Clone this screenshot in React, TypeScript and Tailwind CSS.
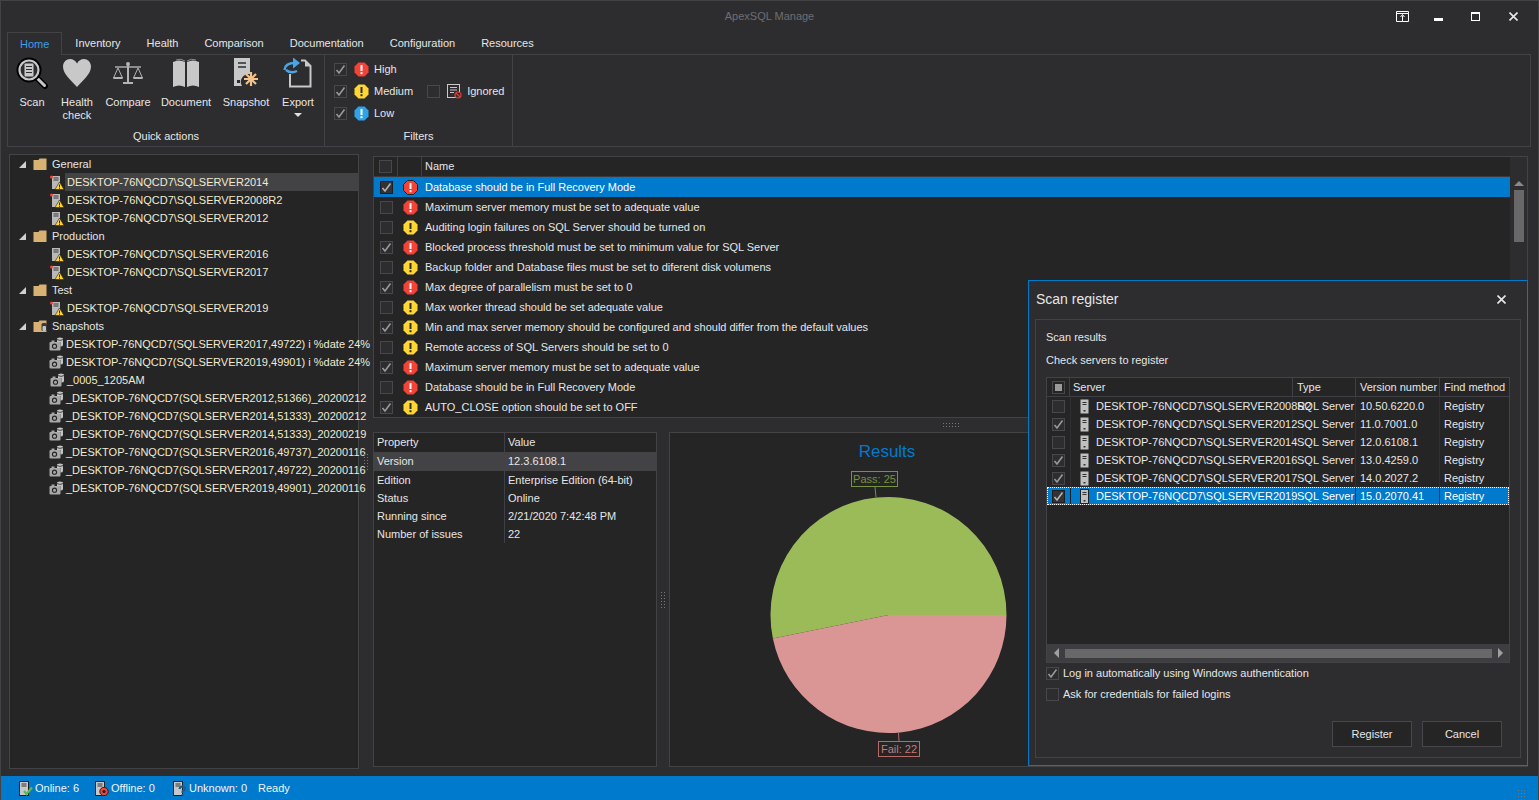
import React from 'react';

const tabs = ['Home', 'Inventory', 'Health', 'Comparison', 'Documentation', 'Configuration', 'Resources'];

type Level = 'high' | 'medium' | 'low';

const issues: { name: string; checked: boolean; level: Level }[] = [
  { name: 'Database should be in Full Recovery Mode', checked: true, level: 'high' },
  { name: 'Maximum server memory must be set to adequate value', checked: false, level: 'high' },
  { name: 'Auditing login failures on SQL Server should be turned on', checked: false, level: 'medium' },
  { name: 'Blocked process threshold must be set to minimum value for SQL Server', checked: true, level: 'high' },
  { name: 'Backup folder and Database files must be set to diferent disk volumens', checked: false, level: 'medium' },
  { name: 'Max degree of parallelism must be set to 0', checked: true, level: 'high' },
  { name: 'Max worker thread should be set adequate value', checked: false, level: 'medium' },
  { name: 'Min and max server memory should be configured and should differ from the default values', checked: true, level: 'medium' },
  { name: 'Remote access of SQL Servers should be set to 0', checked: false, level: 'medium' },
  { name: 'Maximum server memory must be set to adequate value', checked: true, level: 'high' },
  { name: 'Database should be in Full Recovery Mode', checked: false, level: 'high' },
  { name: 'AUTO_CLOSE option should be set to OFF', checked: true, level: 'medium' },
];

const tree = [
  {
    name: 'General', snapshot: false,
    items: [
      { name: 'DESKTOP-76NQCD7\\SQLSERVER2014', dot: true, selected: true },
      { name: 'DESKTOP-76NQCD7\\SQLSERVER2008R2', dot: true },
      { name: 'DESKTOP-76NQCD7\\SQLSERVER2012', dot: false },
    ],
  },
  {
    name: 'Production', snapshot: false,
    items: [
      { name: 'DESKTOP-76NQCD7\\SQLSERVER2016', dot: false },
      { name: 'DESKTOP-76NQCD7\\SQLSERVER2017', dot: true },
    ],
  },
  { name: 'Test', snapshot: false, items: [{ name: 'DESKTOP-76NQCD7\\SQLSERVER2019', dot: true }] },
  {
    name: 'Snapshots', snapshot: true,
    items: [
      { name: 'DESKTOP-76NQCD7(SQLSERVER2017,49722) i %date 24%' },
      { name: 'DESKTOP-76NQCD7(SQLSERVER2019,49901) i %date 24%' },
      { name: '_0005_1205AM' },
      { name: '_DESKTOP-76NQCD7(SQLSERVER2012,51366)_20200212' },
      { name: '_DESKTOP-76NQCD7(SQLSERVER2014,51333)_20200212' },
      { name: '_DESKTOP-76NQCD7(SQLSERVER2014,51333)_20200219' },
      { name: '_DESKTOP-76NQCD7(SQLSERVER2016,49737)_20200116' },
      { name: '_DESKTOP-76NQCD7(SQLSERVER2017,49722)_20200116' },
      { name: '_DESKTOP-76NQCD7(SQLSERVER2019,49901)_20200116' },
    ],
  },
];

const properties = [
  ['Version', '12.3.6108.1'],
  ['Edition', 'Enterprise Edition (64-bit)'],
  ['Status', 'Online'],
  ['Running since', '2/21/2020 7:42:48 PM'],
  ['Number of issues', '22'],
];

const servers = [
  { name: 'DESKTOP-76NQCD7\\SQLSERVER2008R2', version: '10.50.6220.0', checked: false },
  { name: 'DESKTOP-76NQCD7\\SQLSERVER2012', version: '11.0.7001.0', checked: true },
  { name: 'DESKTOP-76NQCD7\\SQLSERVER2014', version: '12.0.6108.1', checked: false },
  { name: 'DESKTOP-76NQCD7\\SQLSERVER2016', version: '13.0.4259.0', checked: true },
  { name: 'DESKTOP-76NQCD7\\SQLSERVER2017', version: '14.0.2027.2', checked: true },
  { name: 'DESKTOP-76NQCD7\\SQLSERVER2019', version: '15.0.2070.41', checked: true, selected: true },
];

function Check({ checked, dark }: { checked?: boolean; dark?: boolean }) {
  return (
    <span className={`flex h-[13px] w-[13px] shrink-0 items-center justify-center border ${dark ? 'border-[#1f1f1f] bg-[#333337]' : 'border-[#48484c] bg-[#2d2d30]'}`}>
      {checked && (
        <svg width="11" height="11" viewBox="0 0 11 11">
          <path d="M1.5 6 L4 9 L9.5 1.5" fill="none" stroke={dark ? '#b4b4b4' : '#999999'} strokeWidth="1.6" />
        </svg>
      )}
    </span>
  );
}

function LevelIcon({ level, ring }: { level: Level; ring?: boolean }) {
  const fill = level === 'high' ? '#f44336' : level === 'medium' ? '#ffd633' : '#2ea3e8';
  const mark = level === 'medium' ? '#2d2d30' : '#ffffff';
  return (
    <svg width="15" height="15" viewBox="0 0 15 15" className="shrink-0">
      <path
        d="M4.5 0.5 H10.5 L14.5 4.5 V10.5 L10.5 14.5 H4.5 L0.5 10.5 V4.5 Z"
        fill={fill}
        stroke={ring ? '#252526' : 'none'}
      />
      <rect x="6.5" y="3" width="2" height="6" fill={mark} />
      <rect x="6.5" y="10.2" width="2" height="2" fill={mark} />
    </svg>
  );
}

function TreeServer({ dot }: { dot?: boolean }) {
  return (
    <svg width="14" height="15" viewBox="0 0 14 15" className="shrink-0">
      <rect x="2" y="1" width="8" height="13" fill="#b9b9b9" />
      <rect x="3.5" y="2.5" width="5" height="1" fill="#3a3a3a" />
      <rect x="3.5" y="4.5" width="5" height="1" fill="#3a3a3a" />
      {dot && <circle cx="1.5" cy="2" r="1.5" fill="#f44336" />}
      <path d="M9.5 7 L14 14.5 H5 Z" fill="#ffd633" stroke="#252526" strokeWidth="0.6" />
      <rect x="9" y="9.5" width="1" height="2.8" fill="#252526" />
      <rect x="9" y="12.8" width="1" height="1" fill="#252526" />
    </svg>
  );
}

function Camera() {
  return (
    <svg width="15" height="14" viewBox="0 0 15 14" className="shrink-0">
      <rect x="0.5" y="5" width="11" height="8.5" rx="1" fill="#a8a8a8" />
      <rect x="2.5" y="3.5" width="3" height="2" fill="#a8a8a8" />
      <circle cx="5.5" cy="9.2" r="2.6" fill="#252526" />
      <circle cx="5.5" cy="9.2" r="1.5" fill="#a8a8a8" />
      <path d="M8 2 Q8 0.5 11 0.5 Q14 0.5 14 2 V8 Q14 9.5 11.5 9.5 V5 H8 Z" fill="#c4c4c4" />
      <path d="M8 2.6 Q11 4.2 14 2.6" fill="none" stroke="#252526" strokeWidth="0.8" />
    </svg>
  );
}

function Folder({ snapshot }: { snapshot?: boolean }) {
  return (
    <svg width="14" height="13" viewBox="0 0 14 13" className="shrink-0">
      <path d="M0.5 2 H5.5 L6.5 0.5 H13.5 V12 H0.5 Z" fill="#d7b273" />
      {snapshot && (
        <>
          <rect x="8.5" y="3" width="5.5" height="8" rx="1.5" fill="#3b3b3b" />
          <rect x="9.5" y="6" width="3.5" height="5" rx="1" fill="#c4c4c4" />
        </>
      )}
    </svg>
  );
}

function ScanIcon() {
  return (
    <svg width="32" height="32" viewBox="0 0 32 32">
      <path d="M21 21 L29 29" stroke="#000000" strokeWidth="6" strokeLinecap="round" />
      <path d="M22 22 L28.5 28.5" stroke="#c8c8c8" strokeWidth="3" strokeLinecap="round" />
      <circle cx="13" cy="13" r="12.5" fill="#000000" />
      <circle cx="13" cy="13" r="9.5" fill="#2d2d30" stroke="#c8c8c8" strokeWidth="2.2" />
      <rect x="8.5" y="6.5" width="9" height="13" rx="1" fill="#c8c8c8" />
      <path d="M10 9.5 H16 M10 12.5 H16 M10 15.5 H16" stroke="#2d2d30" strokeWidth="1.2" />
    </svg>
  );
}

function HeartIcon() {
  return (
    <svg width="30" height="30" viewBox="0 0 30 30">
      <path d="M15 29 C9 22 1 16 1 8.5 C1 4 4.5 1 8 1 C11 1 13.5 2.5 15 5.5 C16.5 2.5 19 1 22 1 C25.5 1 29 4 29 8.5 C29 16 21 22 15 29 Z" fill="#c8c8c8" />
    </svg>
  );
}

function ScalesIcon() {
  return (
    <svg width="32" height="32" viewBox="0 0 32 32">
      <circle cx="16" cy="7" r="2" fill="#b4b4b4" />
      <rect x="15" y="7" width="2" height="19" fill="#b4b4b4" />
      <rect x="11" y="25" width="10" height="2" fill="#b4b4b4" />
      <path d="M3 10 H29" stroke="#b4b4b4" strokeWidth="1.4" />
      <path d="M6 11 L1.5 21 H10.5 Z M26 11 L21.5 21 H30.5 Z" fill="none" stroke="#b4b4b4" />
      <path d="M1.5 21 H10.5 M21.5 21 H30.5" stroke="#b4b4b4" strokeWidth="2" />
    </svg>
  );
}

function BookIcon() {
  return (
    <svg width="28" height="30" viewBox="0 0 28 30">
      <path d="M1 4 Q7 1 13 4 V29 Q7 26 1 29 Z M15 4 Q21 1 27 4 V29 Q21 26 15 29 Z" fill="#c8c8c8" />
      <path d="M4 2 Q9 0 13 3 M24 2 Q19 0 15 3" fill="none" stroke="#8c8c8c" />
    </svg>
  );
}

function SnapshotIcon() {
  return (
    <svg width="32" height="32" viewBox="0 0 32 32">
      <path d="M4 1 H20 V17 A8 8 0 0 0 12 29 H4 Z" fill="#c8c8c8" />
      <path d="M8 6 H16 M8 10 H16" stroke="#2d2d30" strokeWidth="1.6" />
      <rect x="7" y="23" width="3" height="3" fill="#2d2d30" />
      <g stroke="#f5c28a" strokeWidth="2.2">
        <path d="M21 15 V29 M14 22 H28 M16 17 L26 27 M26 17 L16 27" />
      </g>
    </svg>
  );
}

function ExportIcon() {
  return (
    <svg width="30" height="32" viewBox="0 0 30 32">
      <path d="M7 17 V29.5 H27.5 V9 L22 3.5 H18" fill="none" stroke="#c8c8c8" strokeWidth="2" />
      <path d="M22 3 V9.5 H28 Z" fill="#c8c8c8" />
      <path d="M1.5 13 Q2 6 12 6 M14 14 Q8 17 3 13" fill="none" stroke="#4aa5e8" strokeWidth="2.4" />
      <path d="M10 0.5 L17 6 L10 11.5 Z" fill="#4aa5e8" />
    </svg>
  );
}

function DialogServer({ light }: { light?: boolean }) {
  return (
    <svg width="9" height="15" viewBox="0 0 9 15" className="shrink-0">
      <rect x="0.5" y="0.5" width="8" height="14" fill="#c0c0c0" stroke={light ? '#222222' : 'none'} />
      <rect x="2.5" y="3" width="4" height="1" fill="#333333" />
      <rect x="2.5" y="5" width="4" height="1" fill="#333333" />
      <rect x="3.5" y="11" width="2" height="1.5" fill="#333333" />
    </svg>
  );
}

function StatusServer({ badge }: { badge: 'ok' | 'off' | 'unknown' }) {
  return (
    <svg width="15" height="15" viewBox="0 0 15 15" className="shrink-0">
      <rect x="1.5" y="0.5" width="9" height="14" fill="#c8c8c8" stroke="#222222" />
      <rect x="3.5" y="2.5" width="5" height="1" fill="#333333" />
      <rect x="3.5" y="4.5" width="5" height="1" fill="#333333" />
      {badge === 'ok' && <path d="M6 10 L8.5 13 L14 6.5" fill="none" stroke="#5cb85c" strokeWidth="2.2" />}
      {badge === 'off' && (
        <>
          <circle cx="10" cy="10.5" r="4.2" fill="#f44336" stroke="#222222" />
          <circle cx="10" cy="10.5" r="1.6" fill="#222222" />
        </>
      )}
      {badge === 'unknown' && (
        <path d="M7.5 8 Q8 5.5 10.5 5.5 Q13 5.5 13 8 Q13 9.5 10.5 10.5 V12 M10.5 13 V14.5" fill="none" stroke="#1d5d94" strokeWidth="2" />
      )}
    </svg>
  );
}

function RibbonButton({ width, label, icon, arrow }: { width: string; label: React.ReactNode; icon: React.ReactNode; arrow?: boolean }) {
  return (
    <div className={`flex flex-col items-center ${width}`}>
      <div className="flex h-[36px] items-center justify-center">{icon}</div>
      <div className="mt-[5px] text-center leading-[13px]">{label}</div>
      {arrow && <div className="mt-[4px] h-0 w-0 border-x-[4px] border-t-[4px] border-x-transparent border-t-[#e0e0e0]" />}
    </div>
  );
}

function Grip({ className }: { className: string }) {
  return <div className={`bg-[radial-gradient(#77777a_0.7px,transparent_0.8px)] bg-[length:3px_3px] ${className}`} />;
}

function Filter({ checked, level, label }: { checked?: boolean; level: Level; label: string }) {
  return (
    <div className="flex h-[22px] items-center">
      <Check checked={checked} />
      <span className="ml-[7px]"><LevelIcon level={level} /></span>
      <span className="ml-[5px]">{label}</span>
    </div>
  );
}

function PieChart() {
  const cx = 218.5;
  const cy = 182;
  const r = 118;
  const a = (168.5 * Math.PI) / 180;
  const ex = cx + r * Math.cos(a);
  const ey = cy + r * Math.sin(a);
  return (
    <svg width="436" height="333" viewBox="0 0 436 333" className="block">
      <text x="217" y="24" textAnchor="middle" fontSize="17" fill="#007acc">Results</text>
      <path d={`M${cx} ${cy} L${cx + r} ${cy} A${r} ${r} 0 1 0 ${ex} ${ey} Z`} fill="#9bbb59" />
      <path d={`M${cx} ${cy} L${cx + r} ${cy} A${r} ${r} 0 0 1 ${ex} ${ey} Z`} fill="#d99694" />
      <path d="M205 54 L206 64" stroke="#76923c" />
      <rect x="181.5" y="38.5" width="46" height="15" fill="#252526" stroke="#76923c" />
      <text x="204.5" y="50" textAnchor="middle" fontSize="11" fill="#76923c">Pass: 25</text>
      <path d="M228.5 300 L229 308" stroke="#b56a68" />
      <rect x="208.5" y="308.5" width="41" height="15" fill="#252526" stroke="#b56a68" />
      <text x="229" y="320" textAnchor="middle" fontSize="11" fill="#c47a78">Fail: 22</text>
    </svg>
  );
}

export default function App() {
  return (
    <div className="relative flex h-[800px] w-[1539px] flex-col overflow-hidden border border-[#434346] border-b-0 bg-[#2d2d30] font-['Liberation_Sans',sans-serif] text-[11px] text-[#e6e6e6]">
      {/* title bar */}
      <div className="relative flex h-[31px] shrink-0 items-center justify-center pb-[1px] text-[#6d6d70]">
        ApexSQL Manage
        <div className="absolute right-0 top-0 flex h-[31px] items-center text-white">
          <div className="flex w-[36px] justify-center">
            <svg width="13" height="11" viewBox="0 0 13 11">
              <path d="M0.5 0.5 H12.5 V10.5 H0.5 Z M0.5 2.5 H12.5" fill="none" stroke="#ffffff" />
              <path d="M6.5 10 V4.5 M4.5 6 L6.5 3.5 L8.5 6" fill="none" stroke="#ffffff" />
            </svg>
          </div>
          <div className="flex w-[36px] justify-center">
            <div className="mt-[5px] h-[3px] w-[9px] bg-white" />
          </div>
          <div className="flex w-[38px] justify-center">
            <div className="h-[9px] w-[9px] border border-t-2 border-white" />
          </div>
          <div className="flex w-[38px] justify-center">
            <svg width="9" height="9" viewBox="0 0 9 9">
              <path d="M0.5 0.5 L8.5 8.5 M8.5 0.5 L0.5 8.5" stroke="#e8e8e8" strokeWidth="1.6" />
            </svg>
          </div>
          <div className="w-[6px]" />
        </div>
      </div>

      {/* tabs */}
      <div className="ml-[6px] mr-[7px] flex h-[23px] shrink-0 items-center border-b border-[#434346]">
        {tabs.map((tab) =>
          tab === 'Home' ? (
            <div key={tab} className="-mb-px flex h-[23px] items-center border border-b-0 border-[#434346] bg-[#2d2d30] px-[12px] text-[#3d9be8]">
              {tab}
            </div>
          ) : (
            <div key={tab} className="px-[13px]">{tab}</div>
          ),
        )}
      </div>

      {/* ribbon */}
      <div className="ml-[6px] mr-[7px] flex h-[92px] shrink-0 border-x border-b border-[#434346]">
        <div className="flex w-[317px] flex-col border-r border-[#434346]">
          <div className="ml-[2px] flex flex-1">
            <RibbonButton width="w-[44px]" label="Scan" icon={<ScanIcon />} />
            <RibbonButton width="w-[46px]" label={<>Health<br />check</>} icon={<HeartIcon />} />
            <RibbonButton width="w-[56px]" label="Compare" icon={<ScalesIcon />} />
            <RibbonButton width="w-[60px]" label="Document" icon={<BookIcon />} />
            <RibbonButton width="w-[60px]" label="Snapshot" icon={<SnapshotIcon />} />
            <RibbonButton width="w-[44px]" label="Export" icon={<ExportIcon />} arrow />
          </div>
          <div className="mb-[2px] text-center">Quick actions</div>
        </div>
        <div className="flex w-[188px] flex-col border-r border-[#434346]">
          <div className="flex flex-1 pl-[9px] pt-[3px]">
            <div className="flex flex-col">
              <Filter checked level="high" label="High" />
              <Filter checked level="medium" label="Medium" />
              <Filter checked level="low" label="Low" />
            </div>
            <div className="ml-[14px] mt-[22px] flex h-[22px] items-center">
              <Check />
              <svg width="15" height="15" viewBox="0 0 15 15" className="ml-[7px]">
                <rect x="0.5" y="0.5" width="12" height="13" fill="#2d2d30" stroke="#c8c8c8" />
                <path d="M3 3.5 H10 M3 6 H10 M3 8.5 H7" stroke="#c8c8c8" />
                <circle cx="11" cy="11" r="3" fill="#2d2d30" stroke="#e53935" strokeWidth="1.2" />
                <path d="M9 9 L13 13" stroke="#e53935" strokeWidth="1.2" />
              </svg>
              <span className="ml-[5px]">Ignored</span>
            </div>
          </div>
          <div className="mb-[2px] text-center">Filters</div>
        </div>
      </div>

      {/* main */}
      <div className="flex min-h-0 flex-1 pl-[8px] pt-[7px]">
        <div className="h-[615px] w-[350px] shrink-0 border border-[#434346] bg-[#252526]">
          {tree.map((group) => (
            <div key={group.name}>
              <div className="flex h-[18px] items-center pl-[8px]">
                <div className="ml-px h-0 w-0 border-b-[7px] border-l-[7px] border-b-[#d0d0d0] border-l-transparent" />
                <span className="ml-[7px]"><Folder snapshot={group.snapshot} /></span>
                <span className="ml-[5px]">{group.name}</span>
              </div>
              {group.items.map((item) => (
                <div key={item.name} className="flex h-[18px] items-center pl-[39px]">
                  <div className="flex w-[16px] justify-center">
                    {group.snapshot ? <Camera /> : <TreeServer dot={(item as { dot?: boolean }).dot} />}
                  </div>
                  <div className={`flex h-[18px] flex-1 items-center whitespace-nowrap pl-[2px] text-[#f0ead2] ${(item as { selected?: boolean }).selected ? 'bg-[#434346]' : ''}`}>
                    {item.name}
                  </div>
                </div>
              ))}
            </div>
          ))}
        </div>

        <div className="flex w-[14px] shrink-0 items-center justify-center pb-[7px]">
          <Grip className="h-[18px] w-[6px]" />
        </div>

        <div className="flex w-[1155px] shrink-0 flex-col pt-[2px]">
          {/* issues */}
          <div className="flex h-[262px] shrink-0 border border-[#434346] bg-[#252526]">
            <div className="min-w-0 flex-1">
              <div className="flex h-[20px] items-center border-b border-[#3a3a3d]">
                <div className="flex h-full w-[24px] items-center justify-center border-r border-[#3f3f46]"><Check /></div>
                <div className="h-full w-[24px] border-r border-[#3f3f46]" />
                <div className="pl-[3px]">Name</div>
              </div>
              {issues.map((row, i) => (
                <div key={i} className={`flex h-[20px] items-center ${i === 0 ? 'bg-[#007acc] text-white' : ''}`}>
                  <div className="flex w-[24px] justify-center"><Check checked={row.checked} dark={i === 0} /></div>
                  <div className="flex w-[24px] justify-center"><LevelIcon level={row.level} ring={i === 0} /></div>
                  <div className="whitespace-nowrap pl-[3px]">{row.name}</div>
                </div>
              ))}
            </div>
            <div className="flex w-[17px] flex-col items-center bg-[#2d2d30] pt-[24px]">
              <div className="h-0 w-0 border-x-[5px] border-b-[5px] border-x-transparent border-b-[#8a8a8d]" />
              <div className="mt-[4px] h-[52px] w-[10px] bg-[#686868]" />
            </div>
          </div>

          <div className="flex h-[14px] shrink-0 items-center justify-center">
            <Grip className="h-[6px] w-[18px]" />
          </div>

          <div className="flex h-[335px] shrink-0">
            {/* properties */}
            <div className="w-[284px] shrink-0 border border-[#434346] bg-[#252526]">
              <div className="flex h-[19px] items-center">
                <div className="h-full w-[131px] border-r border-[#3f3f46] pl-[3px] leading-[19px]">Property</div>
                <div className="pl-[3px]">Value</div>
              </div>
              {properties.map(([k, v], i) => (
                <div key={k} className={`flex items-center ${i === 0 ? 'h-[19px] bg-[#434346]' : 'h-[18px]'}`}>
                  <div className={`h-full w-[131px] pl-[3px] ${i === 0 ? 'leading-[19px]' : 'border-r border-[#3f3f46] leading-[18px]'}`}>{k}</div>
                  <div className="pl-[3px]">{v}</div>
                </div>
              ))}
            </div>

            <div className="flex w-[12px] shrink-0 items-center justify-center">
              <Grip className="h-[18px] w-[6px]" />
            </div>

            {/* chart */}
            <div className="min-w-0 flex-1 border border-[#434346] bg-[#252526]">
              <PieChart />
            </div>
          </div>
        </div>
      </div>

      {/* status bar */}
      <div className="relative flex h-[24px] shrink-0 items-center bg-[#007acc] pl-[17px] text-[#f4f4f4]">
        <StatusServer badge="ok" />
        <span className="ml-[2px] w-[59px]">Online: 6</span>
        <StatusServer badge="off" />
        <span className="ml-[2px] w-[61px]">Offline: 0</span>
        <StatusServer badge="unknown" />
        <span className="ml-[2px] w-[69px]">Unknown: 0</span>
        <span>Ready</span>
        <Grip className="absolute bottom-[2px] right-[12px] h-[9px] w-[9px]" />
      </div>

      {/* scan register dialog */}
      <div className="absolute left-[1027px] top-[279px] flex h-[486px] w-[500px] flex-col border border-[#007acc] bg-[#2d2d30]">
        <div className="flex h-[38px] shrink-0 items-center justify-between pb-[2px] pl-[7px] pr-[21px]">
          <span className="text-[14px]">Scan register</span>
          <svg width="9" height="9" viewBox="0 0 9 9">
            <path d="M0.5 0.5 L8.5 8.5 M8.5 0.5 L0.5 8.5" stroke="#e8e8e8" strokeWidth="1.6" />
          </svg>
        </div>
        <div className="ml-[6px] flex h-[439px] w-[486px] flex-col border border-[#434346] px-[10px]">
          <div className="mt-[9px] leading-[16px]">Scan results</div>
          <div className="mt-[7px] leading-[16px]">Check servers to register</div>
          <div className="mt-[9px] flex h-[286px] w-[464px] flex-col border border-[#434346] bg-[#252526]">
            <div className="flex h-[19px] shrink-0 items-center border-b border-[#3f3f46]">
              <div className="flex h-full w-[23px] items-center justify-center border-r border-[#3f3f46]">
                <span className="flex h-[13px] w-[13px] items-center justify-center border border-[#48484c]"><span className="h-[7px] w-[7px] bg-[#999999]" /></span>
              </div>
              <div className="h-full w-[223px] border-r border-[#3f3f46] pl-[3px] leading-[18px]">Server</div>
              <div className="h-full w-[63px] border-r border-[#3f3f46] pl-[4px] leading-[18px]">Type</div>
              <div className="h-full w-[84px] whitespace-nowrap border-r border-[#3f3f46] pl-[4px] leading-[18px]">Version number</div>
              <div className="whitespace-nowrap pl-[4px]">Find method</div>
            </div>
            <div className="flex-1">
              {servers.map((s) => (
                <div key={s.name} className={`flex h-[18px] items-center ${s.selected ? 'bg-[#007acc] text-white outline-1 -outline-offset-1 outline-dotted outline-white' : ''}`}>
                  <div className="flex h-full w-[23px] items-center justify-center"><Check checked={s.checked} dark={s.selected} /></div>
                  <div className={`flex h-full w-[223px] items-center border-x pl-[9px] ${s.selected ? 'border-[#1f1f1f] border-r-[#3f8fc4]' : 'border-[#303034]'}`}>
                    <DialogServer light={s.selected} />
                    <span className="ml-[7px] whitespace-nowrap">{s.name}</span>
                  </div>
                  <div className="h-full w-[63px] whitespace-nowrap border-r border-[#303034] pl-[4px] leading-[18px]">SQL Server</div>
                  <div className="h-full w-[84px] border-r border-[#303034] pl-[4px] leading-[18px]">{s.version}</div>
                  <div className="pl-[4px]">Registry</div>
                </div>
              ))}
            </div>
            <div className="flex h-[18px] shrink-0 items-center bg-[#3e3e42] pl-[7px] pr-[6px]">
              <div className="h-0 w-0 border-y-[5px] border-r-[5px] border-y-transparent border-r-[#a0a0a0]" />
              <div className="mx-[6px] h-[9px] flex-1 bg-[#686868]" />
              <div className="h-0 w-0 border-y-[5px] border-l-[5px] border-y-transparent border-l-[#a0a0a0]" />
            </div>
          </div>
          <div className="mt-[0px] flex h-[21px] items-center"><Check checked /><span className="ml-[4px]">Log in automatically using Windows authentication</span></div>
          <div className="flex h-[21px] items-center"><Check /><span className="ml-[4px]">Ask for credentials for failed logins</span></div>
          <div className="mt-[16px] flex justify-end gap-[10px] pr-[8px]">
            <div className="flex h-[26px] w-[80px] items-center justify-center border border-[#48484c] bg-[#252526]">Register</div>
            <div className="flex h-[26px] w-[80px] items-center justify-center border border-[#48484c] bg-[#252526]">Cancel</div>
          </div>
        </div>
      </div>
    </div>
  );
}
